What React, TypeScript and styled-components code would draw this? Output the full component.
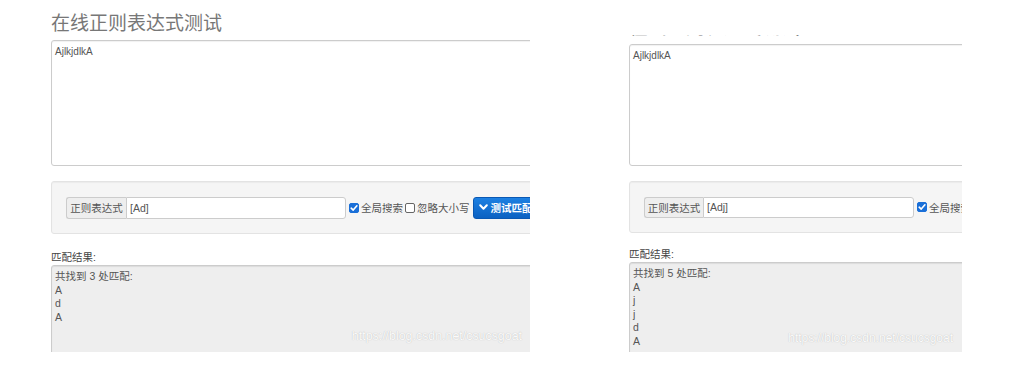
import styled, { createGlobalStyle } from 'styled-components';

const GlobalStyle = createGlobalStyle`
  html, body {
    margin: 0;
    padding: 0;
    background: #fff;
  }
  body {
    width: 1018px;
    height: 382px;
    overflow: hidden;
    font-family: 'Liberation Sans', 'Noto Sans CJK SC', sans-serif;
  }
`;

interface ShotProps {
  matches: string[];
  pattern: string;
  inputWidth: number;
  addonWidth: number;
  textareaHeight: number;
  wellHeight: number;
  groupHeight: number;
  labelGap: number;
  watermarkSize: number;
  watermarkTop: number;
  watermarkRight: number;
}

const Checkbox = ({ checked }: { checked: boolean }) => (
  <CheckBoxMark $checked={checked}>
    {checked && (
      <svg width="8" height="8" viewBox="0 0 8 8">
        <path d="M1.2 4.2 L3.2 6.1 L6.9 1.8" fill="none" stroke="#fff" strokeWidth="1.6" strokeLinecap="round" strokeLinejoin="round" />
      </svg>
    )}
  </CheckBoxMark>
);

const RegexShot = ({
  matches,
  pattern,
  inputWidth,
  addonWidth,
  textareaHeight,
  wellHeight,
  groupHeight,
  labelGap,
  watermarkSize,
  watermarkTop,
  watermarkRight,
}: ShotProps) => (
  <Content>
    <Title>在线正则表达式测试</Title>
    <SourceBox $height={textareaHeight}>AjlkjdlkA</SourceBox>
    <Well $height={wellHeight}>
      <InputGroup $height={groupHeight}>
        <Addon $width={addonWidth}>正则表达式</Addon>
        <PatternInput $width={inputWidth}>{pattern}</PatternInput>
      </InputGroup>
      <CheckLabel>
        <Checkbox checked />
        全局搜索
      </CheckLabel>
      <CheckLabel>
        <Checkbox checked={false} />
        忽略大小写
      </CheckLabel>
      <TestButton $height={groupHeight}>
        <svg width="9" height="7" viewBox="0 0 9 7">
          <path d="M1.2 1.3 L4.5 4.8 L7.8 1.3" fill="none" stroke="#fff" strokeWidth="2" strokeLinecap="round" strokeLinejoin="round" />
        </svg>
        测试匹配
      </TestButton>
    </Well>
    <ResultLabel $gap={labelGap}>匹配结果:</ResultLabel>
    <ResultBox>
      <ResultLine>共找到 {matches.length} 处匹配:</ResultLine>
      {matches.map((m, i) => (
        <ResultLine key={i}>{m}</ResultLine>
      ))}
    </ResultBox>
    <Watermark $size={watermarkSize} $top={watermarkTop} $right={watermarkRight}>
      https://blog.csdn.net/csucsgoat
    </Watermark>
  </Content>
);

const App = () => (
  <>
    <GlobalStyle />
    <Canvas>
      <Shot $width={479} $top={0} $height={352}>
        <Shift $offset={0}>
          <RegexShot
            matches={['A', 'd', 'A']}
            pattern="[Ad]"
            addonWidth={60}
            inputWidth={220}
            textareaHeight={126}
            wellHeight={53}
            groupHeight={22}
            labelGap={16}
            watermarkSize={12.4}
            watermarkTop={329}
            watermarkRight={620 - 479 + 8}
          />
        </Shift>
      </Shot>
      <Shot $width={333} $top={35} $height={317} style={{ marginLeft: 99 }}>
        <Shift $offset={-31}>
          <RegexShot
            matches={['A', 'j', 'j', 'd', 'A']}
            pattern="[Adj]"
            addonWidth={59}
            inputWidth={211}
            textareaHeight={122}
            wellHeight={52}
            groupHeight={21}
            labelGap={14}
            watermarkSize={12}
            watermarkTop={327}
            watermarkRight={620 - 333 + 9}
          />
        </Shift>
      </Shot>
    </Canvas>
  </>
);

export default App;

const Canvas = styled.div`
  display: flex;
  align-items: flex-start;
  padding-left: 51px;
  width: 1018px;
  height: 382px;
  box-sizing: border-box;
`;

const Shot = styled.div<{ $width: number; $top: number; $height: number }>`
  width: ${({ $width }) => $width}px;
  height: ${({ $height }) => $height}px;
  margin-top: ${({ $top }) => $top}px;
  overflow: hidden;
  flex-shrink: 0;
`;

const Shift = styled.div<{ $offset: number }>`
  margin-top: ${({ $offset }) => $offset}px;
`;

const Content = styled.div`
  position: relative;
  width: 620px;
  display: flex;
  flex-direction: column;
  color: #555;
  font-size: 10.5px;
`;

const Title = styled.h1`
  margin: 0;
  padding-top: 11px;
  height: 40px;
  box-sizing: border-box;
  font-size: 19px;
  line-height: 22px;
  font-weight: normal;
  color: #777;
  font-family: 'Noto Sans CJK SC', sans-serif;
`;

const SourceBox = styled.div<{ $height: number }>`
  height: ${({ $height }) => $height}px;
  box-sizing: border-box;
  border: 1px solid #ccc;
  border-radius: 3px;
  background: #fff;
  padding: 4px 3px;
  font-size: 10px;
  line-height: 13px;
  color: #555;
  box-shadow: inset 0 1px 1px rgba(0, 0, 0, 0.06);
`;

const Well = styled.div<{ $height: number }>`
  margin-top: 15px;
  height: ${({ $height }) => $height}px;
  box-sizing: border-box;
  padding: 0 14px;
  background: #f5f5f5;
  border: 1px solid #e3e3e3;
  border-radius: 3px;
  display: flex;
  align-items: center;
  box-shadow: inset 0 1px 1px rgba(0, 0, 0, 0.04);
`;

const InputGroup = styled.div<{ $height: number }>`
  display: flex;
  height: ${({ $height }) => $height}px;
  margin-right: 3px;
`;

const Addon = styled.div<{ $width: number }>`
  width: ${({ $width }) => $width}px;
  box-sizing: border-box;
  display: flex;
  align-items: center;
  justify-content: center;
  background: #eee;
  border: 1px solid #ccc;
  border-right: none;
  border-radius: 3px 0 0 3px;
  color: #555;
`;

const PatternInput = styled.div<{ $width: number }>`
  width: ${({ $width }) => $width}px;
  box-sizing: border-box;
  display: flex;
  align-items: center;
  padding-left: 3px;
  background: #fff;
  border: 1px solid #ccc;
  border-radius: 0 3px 3px 0;
  color: #555;
  font-size: 10.5px;
`;

const CheckLabel = styled.label`
  display: flex;
  align-items: center;
  gap: 2px;
  margin-right: 2px;
  white-space: nowrap;
  color: #555;
`;

const CheckBoxMark = styled.span<{ $checked: boolean }>`
  width: 10px;
  height: 10px;
  box-sizing: border-box;
  border-radius: 2px;
  display: inline-flex;
  align-items: center;
  justify-content: center;
  background: ${({ $checked }) => ($checked ? '#1a6fd8' : '#fff')};
  border: 1px solid ${({ $checked }) => ($checked ? '#1a6fd8' : '#666')};
`;

const TestButton = styled.button<{ $height: number }>`
  height: ${({ $height }) => $height}px;
  margin-left: 1px;
  padding: 0 8px 0 5px;
  display: flex;
  align-items: center;
  gap: 3px;
  border: 1px solid #0a58b3;
  border-radius: 3px;
  background: linear-gradient(#1d80e2, #0b61c2);
  color: #fff;
  font-size: 10.5px;
  font-weight: bold;
  font-family: 'Liberation Sans', 'Noto Sans CJK SC', sans-serif;
  white-space: nowrap;
`;

const ResultLabel = styled.div<{ $gap: number }>`
  margin-top: ${({ $gap }) => $gap}px;
  line-height: 15px;
  color: #444;
`;

const ResultBox = styled.div`
  height: 130px;
  box-sizing: border-box;
  border: 1px solid #ccc;
  border-radius: 3px;
  background: #eee;
  padding: 4px 3px;
  box-shadow: inset 0 1px 1px rgba(0, 0, 0, 0.08);
`;

const ResultLine = styled.div`
  line-height: 13.6px;
  color: #555;
`;

const Watermark = styled.div<{ $size: number; $top: number; $right: number }>`
  position: absolute;
  top: ${({ $top }) => $top}px;
  right: ${({ $right }) => $right}px;
  font-size: ${({ $size }) => $size}px;
  line-height: 15px;
  font-family: 'Liberation Sans', Arial, sans-serif;
  color: rgba(255, 255, 255, 0.95);
  text-shadow: 0 0 1px rgba(0, 0, 0, 0.25);
  white-space: nowrap;
`;
